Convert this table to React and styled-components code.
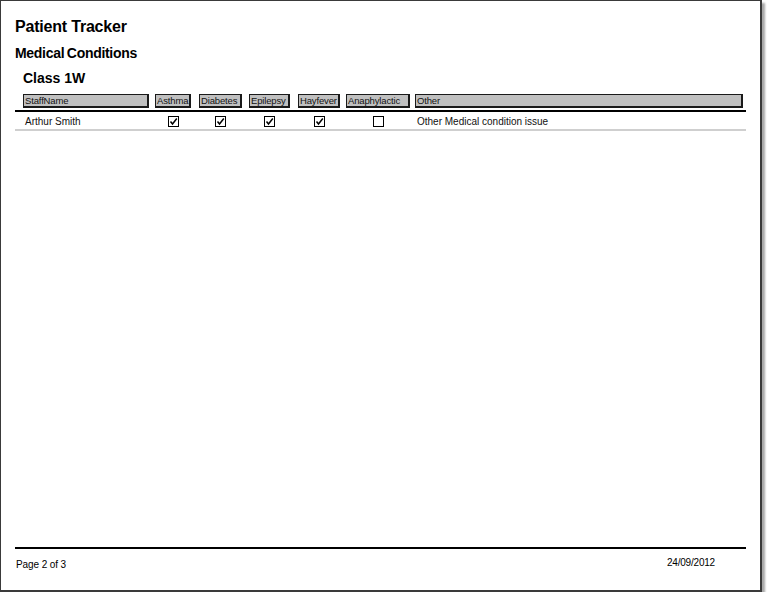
import styled, { createGlobalStyle } from "styled-components";

const GlobalStyle = createGlobalStyle`
  html, body {
    margin: 0;
    padding: 0;
    background: #ffffff;
  }
  body {
    font-family: "Liberation Sans", Arial, sans-serif;
    color: #000;
  }
`;

const columns = [
  { key: "staff", label: "StaffName", width: 126, gap: 8, align: "left" },
  { key: "asthma", label: "Asthma", width: 36, gap: 6, align: "center" },
  { key: "diabetes", label: "Diabetes", width: 43, gap: 8, align: "center" },
  { key: "epilepsy", label: "Epilepsy", width: 41, gap: 7, align: "center" },
  { key: "hayfever", label: "Hayfever", width: 42, gap: 8, align: "center" },
  { key: "anaphylactic", label: "Anaphylactic", width: 64, gap: 6, align: "center" },
  { key: "other", label: "Other", width: 328, gap: 5, align: "left" },
];

const rows = [
  {
    staff: "Arthur Smith",
    asthma: true,
    diabetes: true,
    epilepsy: true,
    hayfever: true,
    anaphylactic: false,
    other: "Other Medical condition issue",
  },
];

export default function App() {
  return (
    <>
      <GlobalStyle />
      <Page>
        <Title>Patient Tracker</Title>
        <Subtitle>Medical Conditions</Subtitle>
        <GroupTitle>Class 1W</GroupTitle>

        <HeaderRow>
          {columns.map((c) => (
            <HeaderCell key={c.key} $w={c.width} $gap={c.gap}>
              {c.label}
            </HeaderCell>
          ))}
        </HeaderRow>
        <HeaderRule />

        {rows.map((r, i) => (
          <DataRow key={i}>
            {columns.map((c) => (
              <DataCell key={c.key} $w={c.width} $gap={c.gap} $align={c.align}>
                {typeof r[c.key] === "boolean" ? (
                  <Check checked={r[c.key]} />
                ) : (
                  <CellText>{r[c.key]}</CellText>
                )}
              </DataCell>
            ))}
          </DataRow>
        ))}

        <Spacer />

        <Footer>
          <FooterText>Page 2 of 3</FooterText>
          <FooterDate>24/09/2012</FooterDate>
        </Footer>
      </Page>
    </>
  );
}

function Check({ checked }) {
  return (
    <svg width="11" height="11" viewBox="0 0 11 11">
      <rect x="0.5" y="0.5" width="10" height="10" fill="#fff" stroke="#000" strokeWidth="1" />
      {checked && (
        <path d="M2.5 5.5 L4.5 8 L8.8 2.5" fill="none" stroke="#000" strokeWidth="1.5" />
      )}
    </svg>
  );
}

const Page = styled.div`
  box-sizing: border-box;
  width: 762px;
  height: 592px;
  border: 1px solid #3a3a3a;
  border-right-width: 2px;
  border-bottom-width: 2px;
  box-shadow: 3px 3px 2px #a8a8a8;
  display: flex;
  flex-direction: column;
  padding: 0 0 0 14px;
  background: #fff;
`;

const Title = styled.div`
  font-size: 16px;
  font-weight: bold;
  line-height: 20px;
  margin-top: 16px;
  letter-spacing: -0.2px;
`;

const Subtitle = styled.div`
  font-size: 14px;
  font-weight: bold;
  line-height: 18px;
  margin-top: 7px;
  letter-spacing: -0.3px;
  word-spacing: -1px;
`;

const GroupTitle = styled.div`
  font-size: 14px;
  font-weight: bold;
  line-height: 18px;
  margin-top: 7px;
  margin-left: 8px;
`;

const HeaderRow = styled.div`
  display: flex;
  margin-top: 7px;
  height: 14px;
`;

const HeaderCell = styled.div`
  box-sizing: border-box;
  width: ${(p) => p.$w}px;
  margin-left: ${(p) => p.$gap}px;
  height: 14px;
  background: #c0c0c0;
  border: 1px solid #1a1a1a;
  border-right-width: 2px;
  border-bottom-width: 2px;
  font-size: 9.5px;
  line-height: 11px;
  padding-left: 1px;
  letter-spacing: -0.15px;
  white-space: nowrap;
  overflow: hidden;
  color: #111;
`;

const HeaderRule = styled.div`
  width: 731px;
  margin-top: 2px;
  height: 2px;
  background: #000;
`;

const DataRow = styled.div`
  box-sizing: border-box;
  display: flex;
  align-items: center;
  width: 731px;
  height: 19px;
  padding-top: 1px;
  border-bottom: 2px solid #cfcfcf;
`;

const DataCell = styled.div`
  box-sizing: border-box;
  width: ${(p) => p.$w}px;
  margin-left: ${(p) => p.$gap}px;
  display: flex;
  justify-content: ${(p) => (p.$align === "center" ? "center" : "flex-start")};
  align-items: center;
  height: 100%;
  &:first-child {
    margin-left: 8px;
  }
`;

const CellText = styled.span`
  font-size: 10px;
  padding-left: 2px;
  white-space: nowrap;
  color: #111;
`;

const Spacer = styled.div`
  flex: 1;
`;

const Footer = styled.div`
  width: 731px;
  border-top: 2px solid #000;
  height: 41px;
  display: flex;
  justify-content: space-between;
  align-items: flex-start;
`;

const FooterText = styled.span`
  font-size: 10px;
  margin-top: 10px;
  margin-left: 1px;
  letter-spacing: -0.1px;
`;

const FooterDate = styled.span`
  font-size: 10px;
  margin-top: 8px;
  margin-right: 31px;
  letter-spacing: -0.2px;
`;
